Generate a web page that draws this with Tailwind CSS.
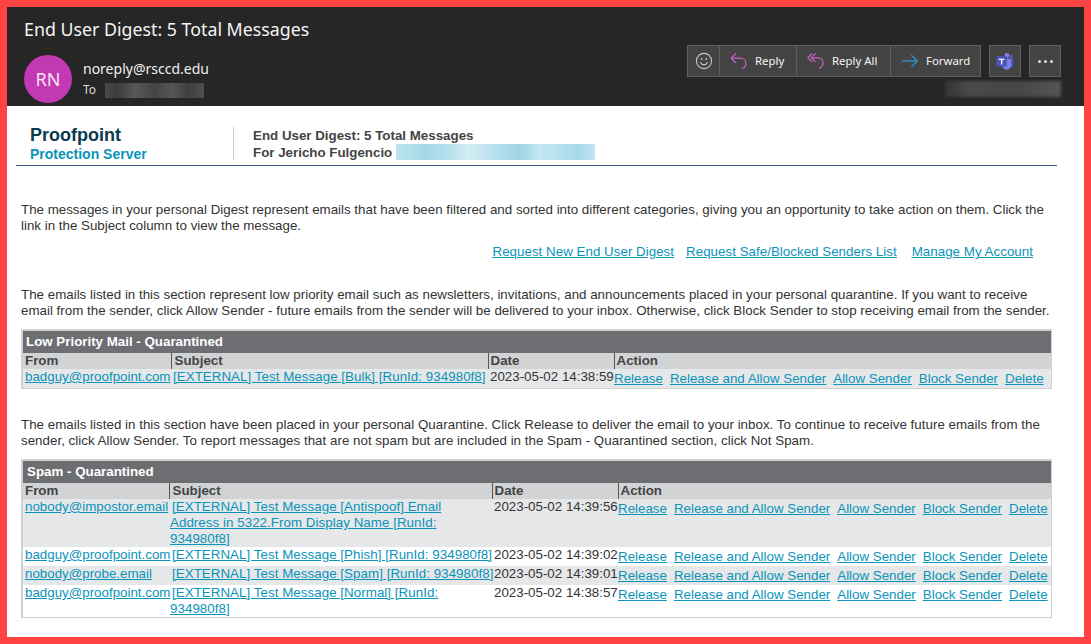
<!doctype html>
<html><head><meta charset="utf-8">
<script src="https://cdn.jsdelivr.net/npm/@tailwindcss/browser@4"></script>
</head>
<body class="m-0 w-[1091px] h-[644px] overflow-hidden bg-[#ff4343] p-[7px]">
<div class="w-[1077px] h-[630px] bg-white flex flex-col overflow-hidden font-['Liberation_Sans',Arial,sans-serif]">
  <header class="h-[99px] shrink-0 bg-[#262626] flex justify-between pl-[17px] pr-[23px] text-white font-['Noto_Sans',sans-serif]">
    <div>
      <h1 class="text-[17.8px] leading-[24px] pt-[10px] font-normal text-[#f4f4f4]">End User Digest: 5 Total Messages</h1>
      <div class="flex mt-[14px] gap-[11px]">
        <div class="w-[48px] h-[48px] rounded-full bg-[#c239b3] flex items-center justify-center text-[18px] text-[#f6e3f3]">RN</div>
        <div class="pt-[4px]">
          <div class="text-[14px] leading-[20px] text-[#f0f0f0]">noreply@rsccd.edu</div>
          <div class="flex items-center text-[12px] leading-[16px] text-[#d8d8d8] mt-[3px]">To<div class="ml-[9px] w-[99px] h-[15px] bg-[linear-gradient(90deg,#4a4a4a,#3c3c3c_12%,#585858_30%,#444_50%,#565656_68%,#3e3e3e_84%,#505050)]"></div></div>
        </div>
      </div>
    </div>
    <div class="pt-[38px] flex flex-col items-end">
      <div class="flex gap-[8px]">
        <div class="flex h-[32px] border border-[#5f5f5f] bg-[#444] text-[11.4px] text-[#f5f5f5] divide-x divide-[#5f5f5f]">
          <div class="w-[32px] flex items-center justify-center">
            <svg width="18" height="18" viewBox="0 0 18 18" fill="none" stroke="#c8c8c8" stroke-width="1.1"><circle cx="9" cy="9" r="7.6"/><path d="M5.6 10.6c.8 1.6 2 2.3 3.4 2.3s2.6-.7 3.4-2.3" stroke-linecap="round"/><circle cx="6.6" cy="7" r=".9" fill="#c8c8c8" stroke="none"/><circle cx="11.4" cy="7" r=".9" fill="#c8c8c8" stroke="none"/></svg>
          </div>
          <div class="w-[77px] flex items-center pl-[10px] gap-[7px]">
            <svg width="18" height="18" viewBox="0 0 18 18" fill="none" stroke="#c962c4" stroke-width="1.2"><path d="M6 1.5 1.2 6.2 6 11"/><path d="M1.4 6.2h9.2c3 0 5.2 2 5.2 5s-1.6 5-4 5.3"/></svg>
            <span>Reply</span>
          </div>
          <div class="w-[94px] flex items-center pl-[10px] gap-[7px]">
            <svg width="18" height="18" viewBox="0 0 18 18" fill="none" stroke="#c962c4" stroke-width="1.2"><path d="M5 1.5.8 5.8 5 10"/><path d="M8.5 1.5 4.3 5.8 8.5 10"/><path d="M4.6 5.8h6.2c3 0 5.2 2 5.2 5s-1.6 5-4 5.5"/></svg>
            <span>Reply All</span>
          </div>
          <div class="w-[89px] flex items-center pl-[11px] gap-[8px]">
            <svg width="16" height="14" viewBox="0 0 16 14" fill="none" stroke="#2e9ae0" stroke-width="1.2"><path d="M0 7h15"/><path d="M9.4 1.2 15.2 7l-5.8 5.8"/></svg>
            <span>Forward</span>
          </div>
        </div>
        <div class="w-[32px] h-[32px] border border-[#5f5f5f] bg-[#444] flex items-center justify-center">
          <svg width="18" height="18" viewBox="0 0 18 18"><circle cx="11" cy="3.4" r="2.4" fill="#7b83eb"/><circle cx="15.3" cy="4.6" r="1.8" fill="#5059c9"/><path d="M12 6.8h5.4v5.2a2.6 2.6 0 0 1-5.2 1z" fill="#5059c9"/><path d="M6 6.8h9v6.4a4.3 4.3 0 0 1-8.6.4z" fill="#7b83eb"/><rect x="0.5" y="4.3" width="10.3" height="10.3" rx="1.2" fill="#4b53bc"/><path d="M2.9 6.7h5.5v1.2H6.3v4.6H5V7.9H2.9z" fill="#fff"/></svg>
        </div>
        <div class="w-[32px] h-[32px] border border-[#5f5f5f] bg-[#444] flex items-center justify-center gap-[3px]">
          <span class="w-[3px] h-[3px] rounded-full bg-[#ddd]"></span><span class="w-[3px] h-[3px] rounded-full bg-[#ddd]"></span><span class="w-[3px] h-[3px] rounded-full bg-[#ddd]"></span>
        </div>
      </div>
      <div class="w-[116px] h-[16px] mt-[4px] bg-[linear-gradient(90deg,#333,#4a4a4a_20%,#464646_60%,#555)] blur-[1.5px]"></div>
    </div>
  </header>

  <div class="mx-[9px] w-[1041px] h-[60px] flex border-b border-[#3d5480] shrink-0">
    <div class="w-[217px] pl-[14px] pt-[18px]">
      <div class="text-[18px] leading-[22px] font-bold text-[#0b3a50]">Proofpoint</div>
      <div class="text-[14px] leading-[16px] font-bold text-[#0a94ba]">Protection Server</div>
    </div>
    <div class="w-px h-[33px] mt-[21px] bg-[#ccc]"></div>
    <div class="pl-[19px] pt-[21px] text-[13.33px] leading-[17px] font-bold text-[#444]">
      <div>End User Digest: 5 Total Messages</div>
      <div class="flex">For Jericho Fulgencio<div class="ml-[4px] w-[199px] h-[16px] bg-[linear-gradient(90deg,#c0e4f0,#a3d7e8_15%,#bfe3ef_30%,#d5edf5_36%,#b5dfec_50%,#9fd5e7_62%,#c4e6f1_72%,#a8dae9_92%,#c4e6f1_100%)]"></div></div>
    </div>
  </div>

  <main class="pl-[14px] text-[13.33px] leading-[16px] text-[#333]">
    <p class="w-[1030px] mt-[36px]">The messages in your personal Digest represent emails that have been filtered and sorted into different categories, giving you an opportunity to take action on them. Click the link in the Subject column to view the message.</p>
    <div class="flex justify-end w-[1012px] gap-[12px] mt-[10px] text-[#0a94ba] underline tracking-[0.03px]">
      <a>Request New End User Digest</a><a class="mr-[3px]">Request Safe/Blocked Senders List</a><a>Manage My Account</a>
    </div>
    <p class="w-[1035px] mt-[27px] tracking-[0.01px]">The emails listed in this section represent low priority email such as newsletters, invitations, and announcements placed in your personal quarantine. If you want to receive email from the sender, click Allow Sender - future emails from the sender will be delivered to your inbox. Otherwise, click Block Sender to stop receiving email from the sender.</p>

    <div class="w-[1031px] border-2 border-[#d0d0d0] border-r-[1px] border-b-[1px] mt-[10px]">
      <div class="h-[22px] bg-[#6d6e71] text-white font-bold leading-[22px] pl-[3px]">Low Priority Mail - Quarantined</div>
      <table class="w-full table-fixed border-collapse">
        <thead><tr class="h-[16px] bg-[#d1d3d4] text-[#444] text-left">
          <th class="w-[148px] p-0 pl-[2px] font-bold">From</th>
          <th class="w-[317px] p-0 pl-[3px] font-bold border-l border-[#555]">Subject</th>
          <th class="w-[126px] p-0 pl-[2px] font-bold border-l border-[#555]">Date</th>
          <th class="p-0 pl-[2px] font-bold border-l border-[#555]">Action</th>
        </tr></thead>
        <tbody><tr class="h-[19px] bg-[#e6e7e8] align-top">
          <td class="p-0 pl-[2px]"><a class="text-[#0a94ba] underline whitespace-nowrap">badguy@proofpoint.com</a></td>
          <td class="p-0 pl-[2px]"><a class="text-[#0a94ba] underline whitespace-nowrap tracking-[0.05px]">[EXTERNAL] Test Message [Bulk] [RunId: 934980f8]</a></td>
          <td class="p-0 pl-[2px] whitespace-nowrap">2023-05-02 14:38:59</td>
          <td class="p-0 pt-[2px] whitespace-nowrap text-[#0a94ba] underline"><div class="flex gap-[7px]"><a>Release</a><a>Release and Allow Sender</a><a>Allow Sender</a><a>Block Sender</a><a>Delete</a></div></td>
        </tr></tbody>
      </table>
    </div>

    <p class="w-[1030px] mt-[28px] tracking-[0.02px]">The emails listed in this section have been placed in your personal Quarantine. Click Release to deliver the email to your inbox. To continue to receive future emails from the sender, click Allow Sender. To report messages that are not spam but are included in the Spam - Quarantined section, click Not Spam.</p>

    <div class="w-[1031px] border-2 border-[#d0d0d0] border-r-[1px] border-b-[1px] mt-[10px]">
      <div class="h-[22px] bg-[#6d6e71] text-white font-bold leading-[22px] pl-[4px]">Spam - Quarantined</div>
      <table class="w-full table-fixed border-collapse">
        <thead><tr class="h-[16px] bg-[#d1d3d4] text-[#444] text-left">
          <th class="w-[146px] p-0 pl-[2px] font-bold">From</th>
          <th class="w-[323px] p-0 pl-[3px] font-bold border-l border-[#555]">Subject</th>
          <th class="w-[126px] p-0 pl-[2px] font-bold border-l border-[#555]">Date</th>
          <th class="p-0 pl-[2px] font-bold border-l border-[#555]">Action</th>
        </tr></thead>
        <tbody>
        <tr class="h-[48px] bg-[#e6e7e8] align-top">
          <td class="p-0 pl-[2px]"><a class="text-[#0a94ba] underline whitespace-nowrap">nobody@impostor.email</a></td>
          <td class="p-0 pl-[1px] indent-[2px]"><a class="text-[#0a94ba] underline tracking-[0.05px]">[EXTERNAL] Test Message [Antispoof] Email<br>Address in 5322.From Display Name [RunId:<br>934980f8]</a></td>
          <td class="p-0 pl-[2px] whitespace-nowrap">2023-05-02 14:39:56</td>
          <td class="p-0 pt-[2px] whitespace-nowrap text-[#0a94ba] underline"><div class="flex gap-[7px]"><a>Release</a><a>Release and Allow Sender</a><a>Allow Sender</a><a>Block Sender</a><a>Delete</a></div></td>
        </tr>
        <tr class="h-[19px] align-top">
          <td class="p-0 pl-[2px]"><a class="text-[#0a94ba] underline whitespace-nowrap">badguy@proofpoint.com</a></td>
          <td class="p-0 pl-[1px] indent-[2px]"><a class="text-[#0a94ba] underline whitespace-nowrap tracking-[0.05px]">[EXTERNAL] Test Message [Phish] [RunId: 934980f8]</a></td>
          <td class="p-0 pl-[2px] whitespace-nowrap">2023-05-02 14:39:02</td>
          <td class="p-0 pt-[2px] whitespace-nowrap text-[#0a94ba] underline"><div class="flex gap-[7px]"><a>Release</a><a>Release and Allow Sender</a><a>Allow Sender</a><a>Block Sender</a><a>Delete</a></div></td>
        </tr>
        <tr class="h-[19px] bg-[#e6e7e8] align-top">
          <td class="p-0 pl-[2px]"><a class="text-[#0a94ba] underline whitespace-nowrap">nobody@probe.email</a></td>
          <td class="p-0 pl-[1px] indent-[2px]"><a class="text-[#0a94ba] underline whitespace-nowrap tracking-[0.05px]">[EXTERNAL] Test Message [Spam] [RunId: 934980f8]</a></td>
          <td class="p-0 pl-[2px] whitespace-nowrap">2023-05-02 14:39:01</td>
          <td class="p-0 pt-[2px] whitespace-nowrap text-[#0a94ba] underline"><div class="flex gap-[7px]"><a>Release</a><a>Release and Allow Sender</a><a>Allow Sender</a><a>Block Sender</a><a>Delete</a></div></td>
        </tr>
        <tr class="h-[32px] align-top">
          <td class="p-0 pl-[2px]"><a class="text-[#0a94ba] underline whitespace-nowrap">badguy@proofpoint.com</a></td>
          <td class="p-0 pl-[1px] indent-[2px]"><a class="text-[#0a94ba] underline tracking-[0.05px]">[EXTERNAL] Test Message [Normal] [RunId:<br>934980f8]</a></td>
          <td class="p-0 pl-[2px] whitespace-nowrap">2023-05-02 14:38:57</td>
          <td class="p-0 pt-[2px] whitespace-nowrap text-[#0a94ba] underline"><div class="flex gap-[7px]"><a>Release</a><a>Release and Allow Sender</a><a>Allow Sender</a><a>Block Sender</a><a>Delete</a></div></td>
        </tr>
        </tbody>
      </table>
    </div>
  </main>
</div>
</body></html>
